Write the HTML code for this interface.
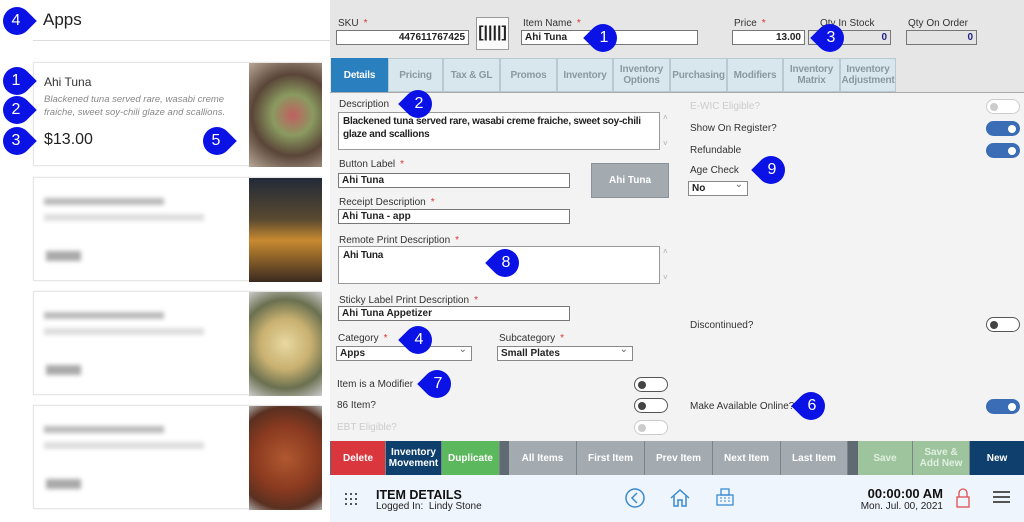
<!DOCTYPE html>
<html><head><meta charset="utf-8"><style>
*{box-sizing:border-box;margin:0;padding:0}
body{width:1024px;height:522px;overflow:hidden;font-family:"Liberation Sans",sans-serif;background:#fff;position:relative;font-size:11px;color:#222}
.a{position:absolute}
.lbl{position:absolute;font-size:10px;color:#333}
.req{color:#d33;margin-left:5px}
.in{position:absolute;background:#fff;border:1px solid #777;font-size:10px;font-weight:bold;padding:1px 3px;height:15px;line-height:12px}
.ta{position:absolute;background:#fff;border:1px solid #999;font-size:10px;font-weight:bold;padding:2px 4px;line-height:13px;letter-spacing:-0.25px}
.sb{position:absolute;width:10px;color:#aaa;font-size:8px}
.tg{position:absolute;width:34px;height:15px;border:1.5px solid #555;border-radius:8px;background:#fff}
.tg:after{content:"";position:absolute;left:3px;top:2.5px;width:8px;height:8px;border-radius:50%;background:#444}
.tg.on{background:#3a6db5;border-color:#3a6db5}
.tg.on:after{left:auto;right:3px;background:#fff}
.tg.dis{border-color:#ccc}.tg.dis:after{background:#ccc}
.tab{position:absolute;top:58px;height:34px;background:#d8e7ee;border:1px solid #b9c9d1;color:#8a98a0;font-size:10px;font-weight:bold;text-align:center;display:flex;align-items:center;justify-content:center;line-height:11px;letter-spacing:-0.2px}
.btn{position:absolute;top:441px;height:34px;color:#fff;font-size:10px;font-weight:bold;display:flex;align-items:center;justify-content:center;text-align:center;line-height:11px;border-right:1px solid #7a8389}
.sel{position:absolute;background:#fff;border:1px solid #888;font-size:10px;font-weight:bold;padding:1px 3px;height:15px;line-height:12px}
.sel:after{content:"⌄";position:absolute;right:4px;top:-3px;color:#666;font-weight:normal}
.bd{position:absolute;width:28px;height:28px;background:#0a12e6;border-radius:50% 0 50% 50%}
.bt{position:absolute;width:28px;height:28px;color:#fff;font-size:16px;text-align:center;line-height:28px}
.card{position:absolute;left:33px;width:288px;height:104px;background:#fff;border:1px solid #e6e6e6;box-shadow:0 0 2px rgba(0,0,0,.08)}
.blur{filter:blur(2px);background:#bbb;position:absolute;height:7px}
</style></head><body>
<div class="a" style="left:0;top:0;width:330px;height:522px;background:#fff"></div>
<div class="a" style="left:43px;top:10px;font-size:17px;color:#222">Apps</div>
<div class="a" style="left:33px;top:40px;width:297px;height:1px;background:#ddd"></div>
<div class="card" style="top:62px">
 <div class="a" style="left:10px;top:12px;font-size:12px;color:#333">Ahi Tuna</div>
 <div class="a" style="left:10px;top:30px;font-size:9.5px;color:#888;font-style:italic;line-height:13px;width:200px">Blackened tuna served rare, wasabi creme fraiche, sweet soy-chili glaze and scallions.</div>
 <div class="a" style="left:10px;top:68px;font-size:16px;color:#222">$13.00</div>
 <div class="a" style="left:215px;top:0;width:73px;height:104px;background:radial-gradient(circle at 60% 50%,#c06060 0,#8a9a60 30%,#5a4538 60%,#b8a898 100%)"></div>
</div>
<div class="card" style="top:177px">
 <div class="blur" style="left:10px;top:20px;width:120px"></div><div class="blur" style="left:10px;top:36px;width:160px;background:#ddd"></div><div class="blur" style="left:12px;top:73px;width:35px;height:10px;background:#aaa"></div>
 <div class="a" style="left:215px;top:0;width:73px;height:104px;background:linear-gradient(180deg,#222a38,#5a4a30 40%,#c88a30 60%,#3a2a20)"></div>
</div>
<div class="card" style="top:291px">
 <div class="blur" style="left:10px;top:20px;width:120px"></div><div class="blur" style="left:10px;top:36px;width:160px;background:#ddd"></div><div class="blur" style="left:12px;top:73px;width:35px;height:10px;background:#aaa"></div>
 <div class="a" style="left:215px;top:0;width:73px;height:104px;background:radial-gradient(circle,#e8d8a0,#c8b070 40%,#6a7050 70%,#ccc)"></div>
</div>
<div class="card" style="top:405px">
 <div class="blur" style="left:10px;top:20px;width:120px"></div><div class="blur" style="left:10px;top:36px;width:160px;background:#ddd"></div><div class="blur" style="left:12px;top:73px;width:35px;height:10px;background:#aaa"></div>
 <div class="a" style="left:215px;top:0;width:73px;height:104px;background:radial-gradient(circle,#b05830,#8a3a20 50%,#5a3020 80%,#aaa)"></div>
</div>
<div class="a" style="left:330px;top:0;width:694px;height:92px;background:#e6e6e6"></div>
<div class="a" style="left:330px;top:92px;width:694px;height:349px;background:#f3f3f3;border-top:1px solid #aaa"></div>
<div class="lbl" style="left:338px;top:18px">SKU<span class="req">*</span></div>
<div class="in" style="left:336px;top:30px;width:133px;text-align:right">447611767425</div>
<div class="a" style="left:476px;top:17px;width:33px;height:33px;background:#fafafa;border:1px solid #999;text-align:center;font-size:16px;line-height:30px;font-weight:bold">[||||]</div>
<div class="lbl" style="left:523px;top:18px">Item Name<span class="req">*</span></div>
<div class="in" style="left:521px;top:30px;width:177px">Ahi Tuna</div>
<div class="lbl" style="left:734px;top:18px">Price<span class="req">*</span></div>
<div class="in" style="left:732px;top:30px;width:73px;text-align:right">13.00</div>
<div class="lbl" style="left:820px;top:18px">Qty In Stock</div>
<div class="in" style="left:808px;top:30px;width:83px;background:#e4e4e4;text-align:right;color:#228">0</div>
<div class="lbl" style="left:908px;top:18px">Qty On Order</div>
<div class="in" style="left:906px;top:30px;width:71px;background:#e4e4e4;text-align:right;color:#228">0</div>
<div class="tab" style="left:331px;width:57px;background:#2a7fbf;color:#fff;border-color:#2a7fbf">Details</div>
<div class="tab" style="left:388px;width:55px">Pricing</div>
<div class="tab" style="left:443px;width:57px">Tax &amp; GL</div>
<div class="tab" style="left:500px;width:57px">Promos</div>
<div class="tab" style="left:557px;width:56px">Inventory</div>
<div class="tab" style="left:613px;width:57px">Inventory<br>Options</div>
<div class="tab" style="left:670px;width:57px">Purchasing</div>
<div class="tab" style="left:727px;width:56px">Modifiers</div>
<div class="tab" style="left:783px;width:57px">Inventory<br>Matrix</div>
<div class="tab" style="left:840px;width:56px">Inventory<br>Adjustment</div>

<div class="lbl" style="left:339px;top:99px">Description</div>
<div class="ta" style="left:338px;top:112px;width:322px;height:38px">Blackened tuna served rare, wasabi creme fraiche, sweet soy-chili glaze and scallions</div>
<div class="sb" style="left:663px;top:113px">˄</div><div class="sb" style="left:663px;top:139px">˅</div>
<div class="lbl" style="left:339px;top:159px">Button Label<span class="req">*</span></div>
<div class="in" style="left:338px;top:173px;width:232px">Ahi Tuna</div>
<div class="a" style="left:591px;top:163px;width:78px;height:35px;background:#a3abb1;border:1px solid #8a9299;color:#fff;font-size:10px;font-weight:bold;text-align:center;line-height:33px">Ahi Tuna</div>
<div class="lbl" style="left:339px;top:197px">Receipt Description<span class="req">*</span></div>
<div class="in" style="left:338px;top:209px;width:232px">Ahi Tuna - app</div>
<div class="lbl" style="left:339px;top:235px">Remote Print Description<span class="req">*</span></div>
<div class="ta" style="left:338px;top:246px;width:322px;height:38px">Ahi Tuna</div>
<div class="sb" style="left:663px;top:247px">˄</div><div class="sb" style="left:663px;top:273px">˅</div>
<div class="lbl" style="left:339px;top:295px">Sticky Label Print Description<span class="req">*</span></div>
<div class="in" style="left:338px;top:306px;width:232px">Ahi Tuna Appetizer</div>
<div class="lbl" style="left:338px;top:333px">Category<span class="req">*</span></div>
<div class="sel" style="left:336px;top:346px;width:136px">Apps</div>
<div class="lbl" style="left:499px;top:333px">Subcategory<span class="req">*</span></div>
<div class="sel" style="left:497px;top:346px;width:136px">Small Plates</div>
<div class="lbl" style="left:337px;top:379px">Item is a Modifier</div><div class="tg" style="left:634px;top:377px"></div>
<div class="lbl" style="left:337px;top:400px">86 Item?</div><div class="tg" style="left:634px;top:398px"></div>
<div class="lbl" style="left:337px;top:422px;color:#ccc">EBT Eligible?</div><div class="tg dis" style="left:634px;top:420px"></div>

<div class="lbl" style="left:690px;top:101px;color:#ccc">E-WIC Eligible?</div><div class="tg dis" style="left:986px;top:99px"></div>
<div class="lbl" style="left:690px;top:123px">Show On Register?</div><div class="tg on" style="left:986px;top:121px"></div>
<div class="lbl" style="left:690px;top:145px">Refundable</div><div class="tg on" style="left:986px;top:143px"></div>
<div class="lbl" style="left:690px;top:165px">Age Check</div>
<div class="sel" style="left:688px;top:181px;width:60px">No</div>
<div class="lbl" style="left:690px;top:320px">Discontinued?</div><div class="tg" style="left:986px;top:317px"></div>
<div class="lbl" style="left:690px;top:401px">Make Available Online?</div><div class="tg on" style="left:986px;top:399px"></div>

<div class="a" style="left:330px;top:441px;width:694px;height:34px;background:#5f6a72"></div>
<div class="btn" style="left:331px;width:55px;background:#d9363e">Delete</div>
<div class="btn" style="left:386px;width:56px;background:#0e3f6d">Inventory<br>Movement</div>
<div class="btn" style="left:442px;width:58px;background:#5cb85c">Duplicate</div>
<div class="btn" style="left:509px;width:68px;background:#a3abb1">All Items</div>
<div class="btn" style="left:577px;width:68px;background:#a3abb1">First Item</div>
<div class="btn" style="left:645px;width:68px;background:#a3abb1">Prev Item</div>
<div class="btn" style="left:713px;width:68px;background:#a3abb1">Next Item</div>
<div class="btn" style="left:781px;width:67px;background:#a3abb1">Last Item</div>
<div class="btn" style="left:858px;width:55px;background:#9dc49d;color:#e0efe0">Save</div>
<div class="btn" style="left:913px;width:57px;background:#9dc49d;color:#e0efe0">Save &amp;<br>Add New</div>
<div class="btn" style="left:970px;width:54px;background:#0e3f6d;border:none">New</div>

<div class="a" style="left:330px;top:475px;width:694px;height:47px;background:#eef5fc"></div>
<svg class="a" style="left:344px;top:492px" width="14" height="14" viewBox="0 0 14 14" fill="#555"><rect x="1" y="1" width="2" height="2"/><rect x="6" y="1" width="2" height="2"/><rect x="11" y="1" width="2" height="2"/><rect x="1" y="6" width="2" height="2"/><rect x="6" y="6" width="2" height="2"/><rect x="11" y="6" width="2" height="2"/><rect x="1" y="11" width="2" height="2"/><rect x="6" y="11" width="2" height="2"/><rect x="11" y="11" width="2" height="2"/></svg>
<div class="a" style="left:376px;top:488px;font-size:12.5px;font-weight:bold;color:#111">ITEM DETAILS</div>
<div class="a" style="left:376px;top:501px;font-size:10px;color:#222">Logged In:&nbsp; Lindy Stone</div>
<svg class="a" style="left:624px;top:487px" width="22" height="22" viewBox="0 0 22 22"><circle cx="11" cy="11" r="9" fill="none" stroke="#3a8ad0" stroke-width="1.5"/><path d="M13 6 L8 11 L13 16" fill="none" stroke="#3a8ad0" stroke-width="1.5"/></svg>
<svg class="a" style="left:669px;top:487px" width="22" height="22" viewBox="0 0 22 22"><path d="M2 11 L11 3 L20 11 M5 9 V19 H9 V13 H13 V19 H17 V9" fill="none" stroke="#3a8ad0" stroke-width="1.5"/></svg>
<svg class="a" style="left:714px;top:486px" width="22" height="22" viewBox="0 0 22 22"><rect x="3" y="9" width="16" height="10" fill="none" stroke="#3a8ad0" stroke-width="1.3"/><rect x="7" y="3" width="8" height="6" fill="none" stroke="#3a8ad0" stroke-width="1.3"/><path d="M6 12h2M10 12h2M14 12h2M6 15h2M10 15h2M14 15h2" stroke="#3a8ad0"/></svg>
<div class="a" style="left:860px;top:486px;width:83px;text-align:right;font-size:13px;font-weight:bold;color:#111">00:00:00 AM</div>
<div class="a" style="left:840px;top:501px;width:103px;text-align:right;font-size:10px;color:#222">Mon. Jul. 00, 2021</div>
<svg class="a" style="left:955px;top:487px" width="16" height="22" viewBox="0 0 16 22"><path d="M4 10 V6 a4 4 0 0 1 8 0 V10" fill="none" stroke="#e05050" stroke-width="1.3"/><rect x="2" y="10" width="12" height="10" fill="none" stroke="#e05050" stroke-width="1.3"/></svg>
<div class="a" style="left:993px;top:491px;width:17px;height:2px;background:#555;box-shadow:0 5px 0 #555,0 10px 0 #555"></div>

<div class="bd" style="left:3px;top:7px;transform:rotate(45deg)"></div><div class="bt" style="left:2px;top:7px">4</div>
<div class="bd" style="left:3px;top:67px;transform:rotate(45deg)"></div><div class="bt" style="left:2px;top:67px">1</div>
<div class="bd" style="left:3px;top:96px;transform:rotate(45deg)"></div><div class="bt" style="left:2px;top:96px">2</div>
<div class="bd" style="left:3px;top:127px;transform:rotate(45deg)"></div><div class="bt" style="left:2px;top:127px">3</div>
<div class="bd" style="left:203px;top:127px;transform:rotate(45deg)"></div><div class="bt" style="left:202px;top:127px">5</div>
<div class="bd" style="left:589px;top:24px;transform:rotate(-135deg)"></div><div class="bt" style="left:590px;top:24px">1</div>
<div class="bd" style="left:816px;top:24px;transform:rotate(-135deg)"></div><div class="bt" style="left:817px;top:24px">3</div>
<div class="bd" style="left:404px;top:90px;transform:rotate(-135deg)"></div><div class="bt" style="left:405px;top:90px">2</div>
<div class="bd" style="left:757px;top:156px;transform:rotate(-135deg)"></div><div class="bt" style="left:758px;top:156px">9</div>
<div class="bd" style="left:491px;top:249px;transform:rotate(-135deg)"></div><div class="bt" style="left:492px;top:249px">8</div>
<div class="bd" style="left:404px;top:326px;transform:rotate(-135deg)"></div><div class="bt" style="left:405px;top:326px">4</div>
<div class="bd" style="left:423px;top:370px;transform:rotate(-135deg)"></div><div class="bt" style="left:424px;top:370px">7</div>
<div class="bd" style="left:797px;top:392px;transform:rotate(-135deg)"></div><div class="bt" style="left:798px;top:392px">6</div>
</body></html>
